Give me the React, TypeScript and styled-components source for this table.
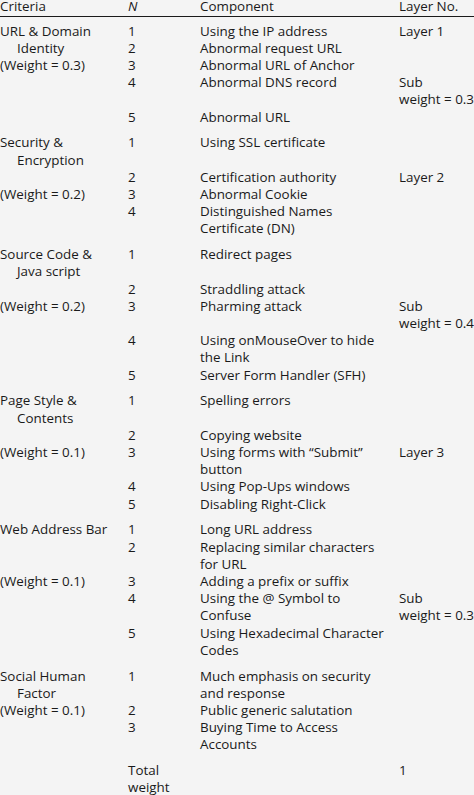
import styled, { createGlobalStyle } from "styled-components";

const GlobalStyle = createGlobalStyle`
  html, body {
    margin: 0;
    padding: 0;
    background: #f4f4f4;
  }
  body {
    overflow: hidden;
  }
`;

interface RowData {
  crit?: string[];
  indent?: boolean;
  n?: string[];
  comp?: string[];
  layer?: string[];
}

const groups: RowData[][] = [
  [
    { crit: ["URL & Domain"], n: ["1"], comp: ["Using the IP address"], layer: ["Layer 1"] },
    { crit: ["Identity"], indent: true, n: ["2"], comp: ["Abnormal request URL"] },
    { crit: ["(Weight = 0.3)"], n: ["3"], comp: ["Abnormal URL of Anchor"] },
    { n: ["4"], comp: ["Abnormal DNS record"], layer: ["Sub", "weight = 0.3"] },
    { n: ["5"], comp: ["Abnormal URL"] },
  ],
  [
    { crit: ["Security &", "Encryption"], n: ["1"], comp: ["Using SSL certificate"] },
    { n: ["2"], comp: ["Certification authority"], layer: ["Layer 2"] },
    { crit: ["(Weight = 0.2)"], n: ["3"], comp: ["Abnormal Cookie"] },
    { n: ["4"], comp: ["Distinguished Names", "Certificate (DN)"] },
  ],
  [
    { crit: ["Source Code &", "Java script"], n: ["1"], comp: ["Redirect pages"] },
    { n: ["2"], comp: ["Straddling attack"] },
    { crit: ["(Weight = 0.2)"], n: ["3"], comp: ["Pharming attack"], layer: ["Sub", "weight = 0.4"] },
    { n: ["4"], comp: ["Using onMouseOver to hide", "the Link"] },
    { n: ["5"], comp: ["Server Form Handler (SFH)"] },
  ],
  [
    { crit: ["Page Style &", "Contents"], n: ["1"], comp: ["Spelling errors"] },
    { n: ["2"], comp: ["Copying website"] },
    { crit: ["(Weight = 0.1)"], n: ["3"], comp: ["Using forms with \u201CSubmit\u201D", "button"], layer: ["Layer 3"] },
    { n: ["4"], comp: ["Using Pop-Ups windows"] },
    { n: ["5"], comp: ["Disabling Right-Click"] },
  ],
  [
    { crit: ["Web Address Bar"], n: ["1"], comp: ["Long URL address"] },
    { n: ["2"], comp: ["Replacing similar characters", "for URL"] },
    { crit: ["(Weight = 0.1)"], n: ["3"], comp: ["Adding a prefix or suffix"] },
    { n: ["4"], comp: ["Using the @ Symbol to", "Confuse"], layer: ["Sub", "weight = 0.3"] },
    { n: ["5"], comp: ["Using Hexadecimal Character", "Codes"] },
  ],
  [
    { crit: ["Social Human", "Factor"], n: ["1"], comp: ["Much emphasis on security", "and response"] },
    { crit: ["(Weight = 0.1)"], n: ["2"], comp: ["Public generic salutation"] },
    { n: ["3"], comp: ["Buying Time to Access", "Accounts"] },
  ],
  [{ n: ["Total", "weight"], layer: ["1"] }],
];

const Table = styled.div`
  font-family: "Open Sans", "Liberation Sans", sans-serif;
  font-size: 13.4px;
  line-height: 17.2px;
  color: #1a1a1a;
  width: 474px;
`;

const Row = styled.div`
  display: grid;
  grid-template-columns: 128px 72px 199px 1fr;
`;

const HeadRow = styled(Row)`
  margin-top: -2px;
  margin-bottom: 1px;
  padding-bottom: 1px;
  border-bottom: 1px solid #1a1a1a;
`;

const Group = styled.div`
  padding: 4.3px 0;
`;

const Cell = styled.div<{ $italic?: boolean }>`
  white-space: nowrap;
  font-style: ${(p) => (p.$italic ? "italic" : "normal")};
`;

const Line = styled.div<{ $indent?: boolean }>`
  padding-left: ${(p) => (p.$indent ? "17px" : "0")};
`;

function Lines({ items, hang }: { items?: string[]; hang?: boolean }) {
  return (
    <>
      {(items ?? []).map((t, i) => (
        <Line key={i} $indent={hang && i > 0}>
          {t}
        </Line>
      ))}
    </>
  );
}

export default function App() {
  return (
    <>
      <GlobalStyle />
      <Table>
        <HeadRow>
          <Cell>Criteria</Cell>
          <Cell $italic>N</Cell>
          <Cell>Component</Cell>
          <Cell>Layer No.</Cell>
        </HeadRow>
        {groups.map((rows, gi) => (
          <Group key={gi}>
            {rows.map((r, ri) => (
              <Row key={ri}>
                <Cell>
                  {r.indent ? (
                    <Line $indent>{r.crit?.[0]}</Line>
                  ) : (
                    <Lines items={r.crit} hang />
                  )}
                </Cell>
                <Cell>
                  <Lines items={r.n} />
                </Cell>
                <Cell>
                  <Lines items={r.comp} />
                </Cell>
                <Cell>
                  <Lines items={r.layer} />
                </Cell>
              </Row>
            ))}
          </Group>
        ))}
      </Table>
    </>
  );
}
